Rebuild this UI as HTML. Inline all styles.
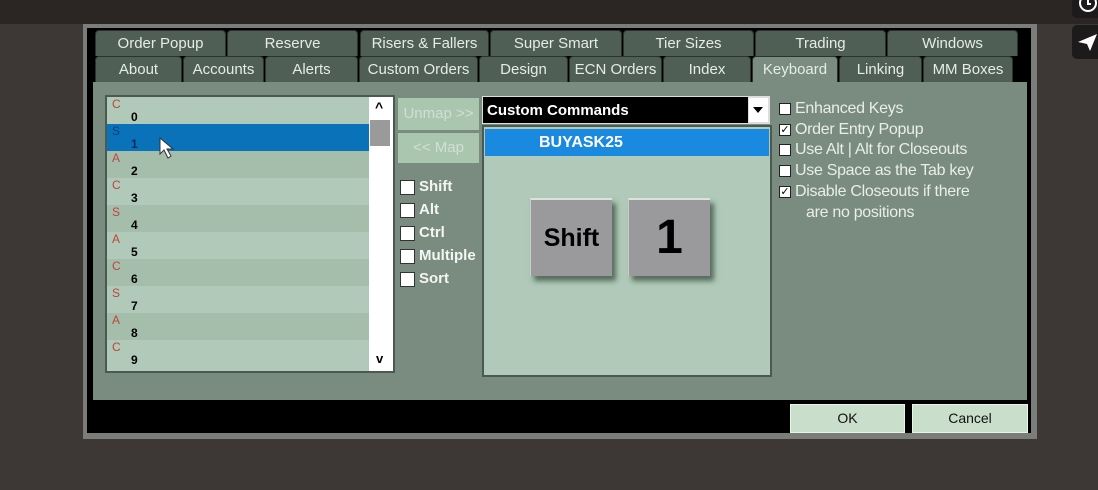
<!DOCTYPE html>
<html><head><style>
*{margin:0;padding:0;box-sizing:border-box}
body{width:1098px;height:490px;overflow:hidden;background:#3d3836;font-family:"Liberation Sans",sans-serif;position:relative}
.a{position:absolute}
.tab{position:absolute;height:26px;background:#4f5f56;border:1px solid #2a332e;border-bottom:none;border-radius:4px 4px 0 0;color:#e4ece6;font-size:15px;text-align:center;line-height:25px}
.row{position:absolute;left:0;width:262px;height:27px;font-size:12px}
.row .l{position:absolute;left:5px;top:0px;color:#c0443a;font-size:12px}
.row .n{position:absolute;left:24px;top:13px;color:#000;font-weight:bold;font-size:12px}
.cb{position:absolute;width:15px;height:15px;background:#fff;border:1px solid #333}
.cl{position:absolute;color:#f4f6f4;font-weight:bold;font-size:15px}
.rc{position:absolute;left:779px;width:12px;height:12px;background:#fff;border:1px solid #222;font-size:11px;line-height:10px;text-align:center;color:#000}
.rt{position:absolute;left:795px;color:#e8eee8;font-size:16px;letter-spacing:-0.3px}
.key{position:absolute;width:82px;height:78px;background:#9a9a9c;border-top:2px solid #e0e0e0;border-left:1px solid #ccc;box-shadow:4px 5px 5px #556b5c;text-align:center;color:#000;font-weight:bold}
.btn{position:absolute;background:#c9dfcb;border:1px solid #e8f4e8;color:#111;text-align:center;font-size:14px;line-height:27px}
</style></head><body>
<div class="a" style="left:0;top:0;width:1098px;height:24px;background:#2b2624"></div>
<div class="a" style="left:83px;top:24px;width:954px;height:415px;background:#7b7d7b"></div>
<div class="a" style="left:87px;top:28px;width:944px;height:405px;background:#000"></div>
<div class="tab" style="left:95px;top:30px;width:131px">Order Popup</div>
<div class="tab" style="left:227px;top:30px;width:131px">Reserve</div>
<div class="tab" style="left:360px;top:30px;width:129px">Risers &amp; Fallers</div>
<div class="tab" style="left:490px;top:30px;width:132px">Super Smart</div>
<div class="tab" style="left:623px;top:30px;width:131px">Tier Sizes</div>
<div class="tab" style="left:755px;top:30px;width:131px">Trading</div>
<div class="tab" style="left:887px;top:30px;width:131px">Windows</div>
<div class="tab" style="left:95px;top:56px;width:87px">About</div>
<div class="tab" style="left:183px;top:56px;width:81px">Accounts</div>
<div class="tab" style="left:265px;top:56px;width:93px">Alerts</div>
<div class="tab" style="left:359px;top:56px;width:119px">Custom Orders</div>
<div class="tab" style="left:479px;top:56px;width:89px">Design</div>
<div class="tab" style="left:569px;top:56px;width:93px">ECN Orders</div>
<div class="tab" style="left:663px;top:56px;width:88px">Index</div>
<div class="tab" style="left:752px;top:56px;width:86px;background:#7a8c80;height:27px">Keyboard</div>
<div class="tab" style="left:839px;top:56px;width:83px">Linking</div>
<div class="tab" style="left:923px;top:56px;width:90px">MM Boxes</div>
<div class="a" style="left:93px;top:82px;width:934px;height:318px;background:#7a8c80"></div>
<div class="a" style="left:105px;top:95px;width:290px;height:278px;background:#4a5a50"></div>
<div class="a" style="left:107px;top:97px;width:262px;height:274px;background:#b0c9b8;overflow:hidden">
<div class="row" style="top:0;background:#b0c9b8"><span class="l">C</span><span class="n">0</span></div>
<div class="row" style="top:27px;background:#0a72b8"><span class="l" style="color:#0b3f80">S</span><span class="n" style="color:#0b2a5a">1</span></div>
<div class="row" style="top:54px;background:#a5beac"><span class="l">A</span><span class="n">2</span></div>
<div class="row" style="top:81px;background:#b0c9b8"><span class="l">C</span><span class="n">3</span></div>
<div class="row" style="top:108px;background:#a5beac"><span class="l">S</span><span class="n">4</span></div>
<div class="row" style="top:135px;background:#b0c9b8"><span class="l">A</span><span class="n">5</span></div>
<div class="row" style="top:162px;background:#a5beac"><span class="l">C</span><span class="n">6</span></div>
<div class="row" style="top:189px;background:#b0c9b8"><span class="l">S</span><span class="n">7</span></div>
<div class="row" style="top:216px;background:#a5beac"><span class="l">A</span><span class="n">8</span></div>
<div class="row" style="top:243px;background:#b0c9b8"><span class="l">C</span><span class="n">9</span></div>
</div>
<div class="a" style="left:369px;top:97px;width:24px;height:274px;background:#fff"></div>
<div class="a" style="left:375px;top:99px;font-weight:bold;font-size:14px">^</div>
<div class="a" style="left:370px;top:120px;width:20px;height:26px;background:#9a9a9a"></div>
<div class="a" style="left:376px;top:351px;font-weight:bold;font-size:13px">v</div>
<svg class="a" style="left:158px;top:136px" width="24" height="26"><path d="M2 2 L2 18 L6 14 L10 22 L13 20 L9 13 L15 13 Z" fill="#fff" stroke="#333" stroke-width="1"/></svg>
<div class="a" style="left:398px;top:98px;width:81px;height:32px;background:#aac6af;color:#cfe0d2;font-size:15px;text-align:center;line-height:32px">Unmap &gt;&gt;</div>
<div class="a" style="left:398px;top:133px;width:81px;height:30px;background:#aac6af;color:#cfe0d2;font-size:15px;text-align:center;line-height:30px">&lt;&lt; Map</div>
<div class="cb" style="left:400px;top:180px"></div><div class="cl" style="left:419px;top:178px">Shift</div>
<div class="cb" style="left:400px;top:203px"></div><div class="cl" style="left:419px;top:201px">Alt</div>
<div class="cb" style="left:400px;top:226px"></div><div class="cl" style="left:419px;top:224px">Ctrl</div>
<div class="cb" style="left:400px;top:249px"></div><div class="cl" style="left:419px;top:247px">Multiple</div>
<div class="cb" style="left:400px;top:272px"></div><div class="cl" style="left:419px;top:270px">Sort</div>
<div class="a" style="left:482px;top:96px;width:288px;height:28px;background:#ddd"></div>
<div class="a" style="left:483px;top:97px;width:265px;height:26px;background:#000;color:#fff;font-weight:bold;font-size:15px;line-height:27px;padding-left:4px">Custom Commands</div>
<div class="a" style="left:749px;top:98px;width:19px;height:24px;background:#fff"></div>
<svg class="a" style="left:753px;top:107px" width="11" height="7"><path d="M0 0H10L5 6Z" fill="#000"/></svg>
<div class="a" style="left:482px;top:125px;width:290px;height:252px;background:#4a5a50"></div>
<div class="a" style="left:484px;top:127px;width:286px;height:248px;background:#b0c9b8"></div>
<div class="a" style="left:485px;top:129px;width:284px;height:27px;background:#1a8ae0;color:#fff;font-weight:bold;font-size:16px;line-height:28px;padding-left:54px">BUYASK25</div>
<div class="key" style="left:530px;top:198px;font-size:25px;line-height:76px">Shift</div>
<div class="key" style="left:628px;top:198px;font-size:48px;line-height:76px">1</div>
<div class="rc" style="top:103px"></div><div class="rt" style="top:100px">Enhanced Keys</div>
<div class="rc" style="top:124px">✓</div><div class="rt" style="top:121px">Order Entry Popup</div>
<div class="rc" style="top:144px"></div><div class="rt" style="top:141px">Use Alt | Alt for Closeouts</div>
<div class="rc" style="top:165px"></div><div class="rt" style="top:162px">Use Space as the Tab key</div>
<div class="rc" style="top:186px">✓</div><div class="rt" style="top:183px">Disable Closeouts if there</div>
<div class="rt" style="left:806px;top:204px">are no positions</div>
<div class="btn" style="left:790px;top:404px;width:115px;height:29px">OK</div>
<div class="btn" style="left:912px;top:404px;width:116px;height:29px">Cancel</div>
<div class="a" style="left:1072px;top:-8px;width:30px;height:26px;background:#1c1a1a;border-radius:5px"></div>
<svg class="a" style="left:1078px;top:0" width="20" height="14"><circle cx="10" cy="3" r="8" fill="none" stroke="#fff" stroke-width="2"/><path d="M10 0V4H13" stroke="#fff" stroke-width="2" fill="none"/></svg>
<div class="a" style="left:1072px;top:25px;width:30px;height:34px;background:#1c1a1a;border-radius:5px"></div>
<svg class="a" style="left:1077px;top:32px" width="21" height="20"><path d="M1 10 L20 2 L13 19 L10 12 Z" fill="#fff"/></svg>
</body></html>
